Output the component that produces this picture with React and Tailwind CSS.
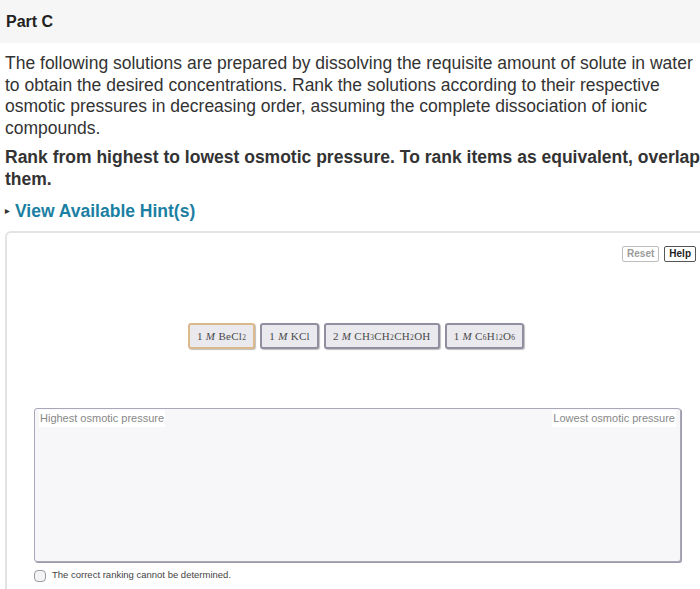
import React from "react";

function Tile({ children, active }) {
  return (
    <div
      className={
        "flex h-[26px] items-center rounded-[3px] border-2 bg-[#e9e9ee] px-[7px] text-[11px] tracking-[0.3px] text-[#4a4a4a] shadow-[1px_1px_1px_rgba(0,0,0,0.25)] " +
        (active ? "border-[#dcb98a]" : "border-[#8f8fa0]")
      }
      style={{ fontFamily: '"Liberation Serif", "DejaVu Serif", serif' }}
    >
      {children}
    </div>
  );
}

function Sub({ children }) {
  return <sub className="text-[7.5px]">{children}</sub>;
}

export default function App() {
  return (
    <div
      className="h-[589px] w-[700px] overflow-hidden bg-white text-[#333]"
      style={{ fontFamily: '"Liberation Sans", Arial, sans-serif' }}
    >
      <div className="w-[720px]">
        <div className="flex h-[43px] items-center bg-[#f6f6f6] px-[6px]">
          <h2 className="text-[16px] font-bold text-[#222]">Part C</h2>
        </div>

        <div className="px-[5px] pt-[10px]">
          <p className="w-[695px] text-[17.5px] leading-[21.7px]">
            The following solutions are prepared by dissolving the requisite amount of solute in water to obtain
            the desired concentrations. Rank the solutions according to their respective osmotic pressures in
            decreasing order, assuming the complete dissociation of ionic compounds.
          </p>

          <p className="mt-[7px] w-[705px] text-[17.5px] font-bold leading-[21.7px]">
            Rank from highest to lowest osmotic pressure. To rank items as equivalent, overlap them.
          </p>

          <div className="mt-[8px] flex items-center gap-[5px] text-[17.5px] font-bold text-[#1b7fa3]">
            <span className="text-[6px] text-[#333]">▶</span>
            <span>View Available Hint(s)</span>
          </div>

          <div className="mt-[7px] h-[400px] rounded-tl-[6px] border-l-2 border-t-2 border-[#e3e3e3] pl-[27px] pt-[13px]">
            <div className="flex justify-end gap-[5px] pr-[19px]">
              <button className="rounded-[2px] border border-[#bdbdbd] bg-white px-[4px] text-[10px] font-bold leading-[14px] text-[#9a9a9a]">
                Reset
              </button>
              <button className="rounded-[2px] border border-[#555] bg-white px-[4px] text-[10px] font-bold leading-[14px] text-[#222]">
                Help
              </button>
            </div>

            <div className="mt-[61px] flex gap-[5px] pl-[154px]">
              <Tile active>
                1&nbsp;<i>M</i>&nbsp;BeCl<Sub>2</Sub>
              </Tile>
              <Tile>
                1&nbsp;<i>M</i>&nbsp;KCl
              </Tile>
              <Tile>
                2&nbsp;<i>M</i>&nbsp;CH<Sub>3</Sub>CH<Sub>2</Sub>CH<Sub>2</Sub>OH
              </Tile>
              <Tile>
                1&nbsp;<i>M</i>&nbsp;C<Sub>6</Sub>H<Sub>12</Sub>O<Sub>6</Sub>
              </Tile>
            </div>

            <div className="mt-[59px] h-[154px] w-[647px] rounded-[3px] border border-[#a8a8b8] bg-[#f7f7f9] shadow-[1px_1px_0_#9a9aab]">
              <div className="flex justify-between px-[4px] pt-[1px] text-[11px] text-[#888]">
                <span className="bg-white px-[1px]">Highest osmotic pressure</span>
                <span className="bg-white px-[1px]">Lowest osmotic pressure</span>
              </div>
            </div>

            <label className="mt-[6px] flex items-center gap-[6px] text-[9.5px] text-[#444]">
              <span className="h-[12px] w-[12px] rounded-[4px] border border-[#9a9aa6] bg-[#f4f4f6]" />
              The correct ranking cannot be determined.
            </label>
          </div>
        </div>
      </div>
    </div>
  );
}
